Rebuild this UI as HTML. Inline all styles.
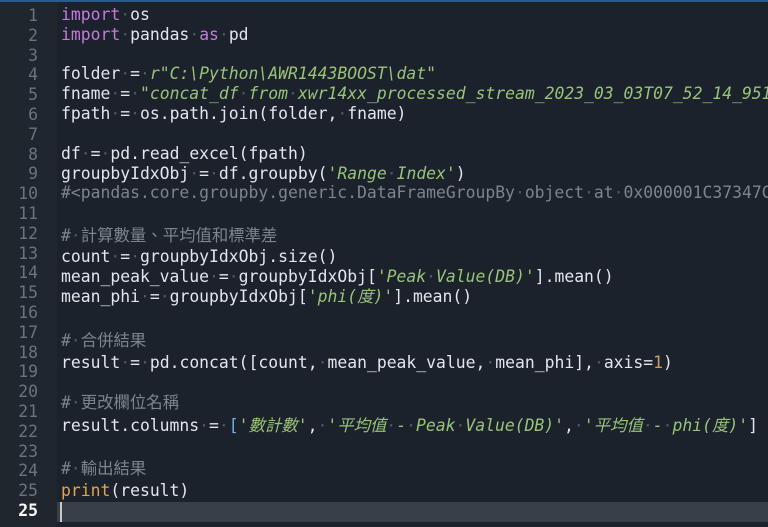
<!DOCTYPE html>
<html><head><meta charset="utf-8"><style>
html,body{margin:0;padding:0;}
body{width:768px;height:527px;overflow:hidden;background:#1b222c;position:relative;font-family:"DejaVu Sans Mono","Liberation Mono","Noto Sans CJK TC",monospace;font-size:16.4px;}
.top{position:absolute;left:0;top:0;width:768px;height:2px;background:#2b5b8c;}
.gut{position:absolute;left:0;top:2px;width:57px;height:525px;background:#20262e;}
.hl{position:absolute;left:57px;top:502px;width:711px;height:20px;background:#393f47;}
.cur{position:absolute;left:60px;top:502px;width:2px;height:20px;background:#c8c8c8;}
.nums{position:absolute;left:0;top:6px;width:38px;text-align:right;color:#6b737c;}
.nums div{height:19.8px;line-height:19.8px;white-space:pre;}
.nums .a{color:#fff;font-weight:bold;}
.code{position:absolute;left:61px;top:0;color:#e3e6ea;}
.code div{position:absolute;left:0;height:20px;line-height:20px;white-space:pre;}
.k{color:#c678dd}.s{color:#98c379;font-style:italic}.c{color:#7d848c}.n{color:#d19a66}.p{color:#e5a24f}.b{color:#6fb3e8}
.d{color:#4f5862}
</style></head><body>
<div class="top"></div><div class="gut"></div><div class="hl"></div><div class="cur"></div>
<div class="nums"><div>1</div><div>2</div><div>3</div><div>4</div><div>5</div><div>6</div><div>7</div><div>8</div><div>9</div><div>10</div><div>11</div><div>12</div><div>13</div><div>14</div><div>15</div><div>16</div><div>17</div><div>18</div><div>19</div><div>20</div><div>21</div><div>22</div><div>23</div><div>24</div><div>25</div><div class="a">25</div></div>
<div class="code">
<div style="top:5px"><span class="k">import</span><span class="d">·</span>os</div>
<div style="top:25px"><span class="k">import</span><span class="d">·</span>pandas<span class="d">·</span><span class="k">as</span><span class="d">·</span>pd</div>
<div style="top:64px">folder<span class="d">·</span>=<span class="d">·</span><span class="s">r"C:\Python\AWR1443BOOST\dat"</span></div>
<div style="top:84px">fname<span class="d">·</span>=<span class="d">·</span><span class="s">"concat_df<span class="d">·</span>from<span class="d">·</span>xwr14xx_processed_stream_2023_03_03T07_52_14_951</span></div>
<div style="top:104px">fpath<span class="d">·</span>=<span class="d">·</span>os.path.join(folder,<span class="d">·</span>fname)</div>
<div style="top:144px">df<span class="d">·</span>=<span class="d">·</span>pd.read_excel(fpath)</div>
<div style="top:164px">groupbyIdxObj<span class="d">·</span>=<span class="d">·</span>df.groupby(<span class="s">'Range<span class="d">·</span>Index'</span>)</div>
<div style="top:183px" class="c">#&lt;pandas.core.groupby.generic.DataFrameGroupBy<span class="d">·</span>object<span class="d">·</span>at<span class="d">·</span>0x000001C37347C</div>
<div style="top:226px" class="c">#<span class="d">·</span>計算數量、平均值和標準差</div>
<div style="top:247px">count<span class="d">·</span>=<span class="d">·</span>groupbyIdxObj.size()</div>
<div style="top:267px">mean_peak_value<span class="d">·</span>=<span class="d">·</span>groupbyIdxObj[<span class="s">'Peak<span class="d">·</span>Value(DB)'</span>].mean()</div>
<div style="top:287px">mean_phi<span class="d">·</span>=<span class="d">·</span>groupbyIdxObj[<span class="s">'phi(度)'</span>].mean()</div>
<div style="top:331px" class="c">#<span class="d">·</span>合併結果</div>
<div style="top:353px">result<span class="d">·</span>=<span class="d">·</span>pd.concat([count,<span class="d">·</span>mean_peak_value,<span class="d">·</span>mean_phi],<span class="d">·</span>axis=<span class="n">1</span>)</div>
<div style="top:393px" class="c">#<span class="d">·</span>更改欄位名稱</div>
<div style="top:416px">result.columns<span class="d">·</span>=<span class="d">·</span><span class="b">[</span><span class="s">'數計數'</span>,<span class="d">·</span><span class="s">'平均值<span class="d">·</span>-<span class="d">·</span>Peak<span class="d">·</span>Value(DB)'</span>,<span class="d">·</span><span class="s">'平均值<span class="d">·</span>-<span class="d">·</span>phi(度)'</span>]</div>
<div style="top:459px" class="c">#<span class="d">·</span>輸出結果</div>
<div style="top:481px"><span class="p">print</span>(result)</div>
</div>
</body></html>
